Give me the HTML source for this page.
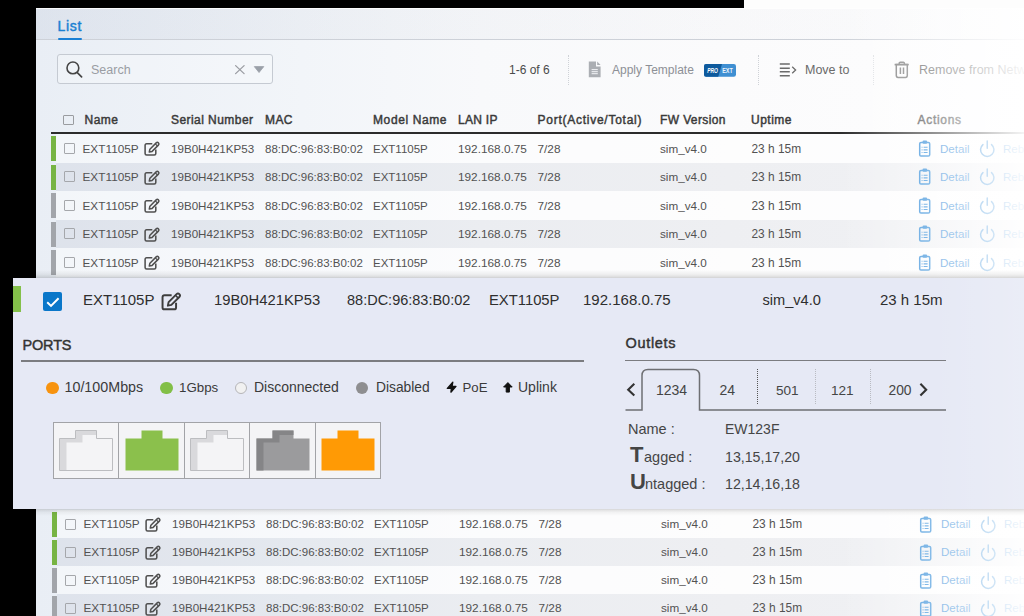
<!DOCTYPE html>
<html><head><meta charset="utf-8"><style>
html,body{margin:0;padding:0;}
body{width:1024px;height:616px;position:relative;overflow:hidden;background:#000;font-family:"Liberation Sans",sans-serif;}
.tx{position:absolute;left:0;top:0;font-family:"Liberation Sans",sans-serif;}
svg{overflow:visible}
</style></head><body>
<div id="list" style="position:absolute;left:36px;top:8px;width:988px;height:608px;background:linear-gradient(90deg,#e9eef5 0%,#f2f5f9 27%,#f8f9fb 45%,#fbfbfc 70%,#fdfdfe 100%);overflow:hidden">
<div style="position:absolute;left:0px;top:0px;width:988px;height:31px;background:linear-gradient(90deg,rgba(40,60,110,0.06) 0%,rgba(40,60,100,0.035) 30%,rgba(40,60,100,0.015) 70%,rgba(40,60,100,0.01) 100%)"></div>
<div style="position:absolute;left:0px;top:0px;width:988px;height:1px;background:rgba(255,255,255,0.8)"></div>
<div style="position:absolute;left:0px;top:31px;width:988px;height:1px;background:#cdd1d8"></div>
</div>
<svg class="tx" width="1024" height="616"><text x="57.5" y="30.5" font-size="14" fill="#1b7fd2" stroke="#1b7fd2" stroke-width="0.45" textLength="23.8" lengthAdjust="spacing">List</text></svg>
<div style="position:absolute;left:57.5px;top:37.5px;width:24.5px;height:2.5px;background:#1a7fd4;border-radius:1px"></div>
<div style="position:absolute;left:57px;top:54px;width:216px;height:30px;box-sizing:border-box;border:1px solid #c5cad2;border-radius:3px;background:rgba(255,255,255,0.25)"></div>
<svg style="position:absolute;left:62px;top:58px" width="24" height="24" viewBox="0 0 24 24"><circle cx="10.9" cy="9.9" r="5.9" fill="none" stroke="#454545" stroke-width="1.6"/><line x1="15.3" y1="14.6" x2="19.6" y2="18.8" stroke="#454545" stroke-width="1.7" stroke-linecap="round"/></svg>
<svg class="tx" width="1024" height="616"><text x="91" y="74" font-size="12.5" fill="#9a9da3" >Search</text></svg>
<svg style="position:absolute;left:232px;top:63px" width="16" height="13" viewBox="0 0 16 13"><path d="M3.6 2.6 L12.1 10.6 M12.1 2.6 L3.6 10.6" stroke="#9a9ca2" stroke-width="1.3" stroke-linecap="round"/></svg>
<svg style="position:absolute;left:252px;top:64px" width="14" height="10" viewBox="0 0 14 10"><path d="M2.3 2.6 L11.8 2.6 L7.05 8.5 Z" fill="#9aa0a8" stroke="#9aa0a8" stroke-width="0.8" stroke-linejoin="round"/></svg>
<svg class="tx" width="1024" height="616"><text x="509" y="74" font-size="12" fill="#4a4a4a" >1-6 of 6</text></svg>
<div style="position:absolute;left:567.5px;top:54.5px;width:0px;height:30px;border-left:1px dotted #cfd2d7"></div>
<svg style="position:absolute;left:587px;top:60px" width="16" height="19" viewBox="0 0 16 19"><path d="M1.8 1.6 H9 V6.4 H13.6 V17.3 H1.8 Z" fill="#abaeb3"/><path d="M10.2 1.6 L13.6 5 H10.2 Z" fill="#abaeb3"/><path d="M4.6 9.6 H10.8 M4.6 11.7 H10.8 M4.6 13.7 H10.8" stroke="#f3f4f7" stroke-width="1"/></svg>
<svg class="tx" width="1024" height="616"><text x="612" y="74" font-size="12" fill="#8d9096" >Apply Template</text></svg>
<svg style="position:absolute;left:704px;top:64px" width="32" height="13" viewBox="0 0 32 13"><defs><clipPath id="bc"><rect x="0" y="0" width="32" height="12.8" rx="2.2"/></clipPath></defs><g clip-path="url(#bc)"><rect width="32" height="13" fill="#3f8fd2"/><path d="M0 0 H18 L14.2 13 H0 Z" fill="#0e5a9d"/></g><text x="3.2" y="8.9" font-family="Liberation Sans" font-weight="bold" font-style="italic" font-size="6.4" textLength="10.8" lengthAdjust="spacingAndGlyphs" fill="#fff">PRO</text><text x="18.2" y="8.9" font-family="Liberation Sans" font-weight="bold" font-size="6.4" textLength="10.6" lengthAdjust="spacingAndGlyphs" fill="#eef5fc">EXT</text></svg>
<div style="position:absolute;left:757.5px;top:54.5px;width:0px;height:30px;border-left:1px dotted #cfd2d7"></div>
<svg style="position:absolute;left:777px;top:62px" width="22" height="16" viewBox="0 0 22 16"><path d="M2.8 2.1 H12.8 M2.8 6.2 H12.8 M2.8 9.8 H12.8 M2.8 13.8 H12.8" stroke="#6b6b6b" stroke-width="1.5"/><path d="M15.2 4.8 L18.6 8 L15.2 11.2" fill="none" stroke="#6b6b6b" stroke-width="1.3"/></svg>
<svg class="tx" width="1024" height="616"><text x="805" y="74" font-size="12.5" fill="#6a6a6a" >Move to</text></svg>
<div style="position:absolute;left:872.5px;top:54.5px;width:0px;height:30px;border-left:1px dotted #dfe1e4"></div>
<svg style="position:absolute;left:893px;top:60px" width="18" height="20" viewBox="0 0 18 20"><path d="M3.3 4.6 H14.3 V15.6 Q14.3 17.4 12.5 17.4 H5.1 Q3.3 17.4 3.3 15.6 Z" fill="none" stroke="#777" stroke-width="1.5"/><path d="M1.6 4.6 H15.8" stroke="#777" stroke-width="1.6"/><path d="M6.2 4.2 V3.3 Q6.2 2.2 7.3 2.2 H10.3 Q11.4 2.2 11.4 3.3 V4.2" fill="none" stroke="#777" stroke-width="1.4"/><path d="M7.4 7.5 V14 M10.5 7.5 V14" stroke="#777" stroke-width="1.5"/></svg>
<svg class="tx" width="1024" height="616"><text x="919" y="74" font-size="12.5" fill="#555" >Remove from Network</text></svg>
<div style="position:absolute;left:63px;top:114.5px;width:11px;height:10.5px;box-sizing:border-box;border:1px solid #9a9ca0;border-radius:1px"></div>
<svg class="tx" width="1024" height="616"><text x="84.5" y="124" font-size="12" fill="#3a3a3a" stroke="#3a3a3a" stroke-width="0.45" textLength="33.5" lengthAdjust="spacing">Name</text><text x="171" y="124" font-size="12" fill="#3a3a3a" stroke="#3a3a3a" stroke-width="0.45" textLength="82" lengthAdjust="spacing">Serial Number</text><text x="265" y="124" font-size="12" fill="#3a3a3a" stroke="#3a3a3a" stroke-width="0.45" textLength="27.5" lengthAdjust="spacing">MAC</text><text x="373" y="124" font-size="12" fill="#3a3a3a" stroke="#3a3a3a" stroke-width="0.45" textLength="73.5" lengthAdjust="spacing">Model Name</text><text x="458" y="124" font-size="12" fill="#3a3a3a" stroke="#3a3a3a" stroke-width="0.45" textLength="39.5" lengthAdjust="spacing">LAN IP</text><text x="537.5" y="124" font-size="12" fill="#3a3a3a" stroke="#3a3a3a" stroke-width="0.45" textLength="104" lengthAdjust="spacing">Port(Active/Total)</text><text x="660" y="124" font-size="12" fill="#3a3a3a" stroke="#3a3a3a" stroke-width="0.45" textLength="65.5" lengthAdjust="spacing">FW Version</text><text x="751" y="124" font-size="12" fill="#3a3a3a" stroke="#3a3a3a" stroke-width="0.45" textLength="40.5" lengthAdjust="spacing">Uptime</text><text x="917.5" y="124" font-size="12" fill="#3a3a3a" stroke="#3a3a3a" stroke-width="0.45" textLength="43.5" lengthAdjust="spacing">Actions</text></svg>
<div style="position:absolute;left:50.5px;top:132.3px;width:974px;height:2px;background:#2c2c2c"></div>
<div style="position:absolute;left:56px;top:134px;width:968px;height:28.5px;background:rgba(255,255,255,0.45)"></div>
<div style="position:absolute;left:51px;top:136.3px;width:5px;height:25.0px;background:#77b443"></div>
<div style="position:absolute;left:64px;top:142.95px;width:11px;height:11px;box-sizing:border-box;border:1px solid #a5a7ab;border-radius:1px"></div>
<svg class="tx" width="1024" height="616"><text x="82.5" y="152.55" font-size="11.8" fill="#525252" >EXT1105P</text></svg>
<svg style="position:absolute;left:143px;top:140.05px" width="18" height="18" viewBox="0 0 18 18"><path d="M9.3 3.8 H3.6 Q2.1 3.8 2.1 5.3 V13.4 Q2.1 14.9 3.6 14.9 H11.3 Q12.8 14.9 12.8 13.4 V9.6" fill="none" stroke="#505050" stroke-width="1.55"/><path d="M6.3 12 L6.9 9.2 L13.2 2.9 Q14.3 1.8 15.4 2.9 Q16.5 4 15.4 5.1 L9.1 11.4 Z" fill="none" stroke="#505050" stroke-width="1.5" stroke-linejoin="round"/><path d="M12.3 3.8 L14.5 6" stroke="#505050" stroke-width="1.2"/></svg>
<svg class="tx" width="1024" height="616"><text x="171" y="152.55" font-size="11.6" fill="#525252" >19B0H421KP53</text><text x="265" y="152.55" font-size="11.5" fill="#525252" >88:DC:96:83:B0:02</text><text x="373" y="152.55" font-size="11.5" fill="#525252" >EXT1105P</text><text x="458" y="152.55" font-size="11.8" fill="#525252" >192.168.0.75</text><text x="537.5" y="152.55" font-size="11.8" fill="#525252" >7/28</text><text x="660" y="152.55" font-size="11.7" fill="#525252" >sim_v4.0</text><text x="751.5" y="152.55" font-size="11.9" fill="#525252" >23 h 15m</text></svg>
<svg style="position:absolute;left:917px;top:138.75px" width="14" height="18" viewBox="0 0 14 18"><rect x="2.7" y="3.5" width="10" height="13.6" rx="1.3" fill="none" stroke="#1a7fd4" stroke-width="1.5"/><rect x="5.6" y="1.5" width="4.5" height="3.2" rx="1" fill="#1a7fd4"/><path d="M6.6 8.3 H10.6 M6.6 10.9 H10.6 M6.6 13.5 H10.6 M4.6 8.3 H5.5 M4.6 10.9 H5.5 M4.6 13.5 H5.5" stroke="#1a7fd4" stroke-width="1.1"/></svg>
<svg class="tx" width="1024" height="616"><text x="940" y="152.55" font-size="11.6" fill="#1a7fd4" >Detail</text></svg>
<svg style="position:absolute;left:979px;top:138.75px" width="16" height="18" viewBox="0 0 16 18"><path d="M3.95 5.57 A6.7 6.7 0 1 0 12.55 5.57" fill="none" stroke="#1a7fd4" stroke-width="1.5" stroke-linecap="round"/><path d="M8.25 2 V9.2" stroke="#1a7fd4" stroke-width="1.5" stroke-linecap="round"/></svg>
<svg class="tx" width="1024" height="616"><text x="1003" y="152.55" font-size="11.6" fill="#1a7fd4" >Reboot</text></svg>
<div style="position:absolute;left:56px;top:162.5px;width:968px;height:28.5px;background:rgba(30,45,80,0.058)"></div>
<div style="position:absolute;left:51px;top:164.8px;width:5px;height:25.0px;background:#77b443"></div>
<div style="position:absolute;left:64px;top:171.45px;width:11px;height:11px;box-sizing:border-box;border:1px solid #a5a7ab;border-radius:1px"></div>
<svg class="tx" width="1024" height="616"><text x="82.5" y="181.05" font-size="11.8" fill="#525252" >EXT1105P</text></svg>
<svg style="position:absolute;left:143px;top:168.55px" width="18" height="18" viewBox="0 0 18 18"><path d="M9.3 3.8 H3.6 Q2.1 3.8 2.1 5.3 V13.4 Q2.1 14.9 3.6 14.9 H11.3 Q12.8 14.9 12.8 13.4 V9.6" fill="none" stroke="#505050" stroke-width="1.55"/><path d="M6.3 12 L6.9 9.2 L13.2 2.9 Q14.3 1.8 15.4 2.9 Q16.5 4 15.4 5.1 L9.1 11.4 Z" fill="none" stroke="#505050" stroke-width="1.5" stroke-linejoin="round"/><path d="M12.3 3.8 L14.5 6" stroke="#505050" stroke-width="1.2"/></svg>
<svg class="tx" width="1024" height="616"><text x="171" y="181.05" font-size="11.6" fill="#525252" >19B0H421KP53</text><text x="265" y="181.05" font-size="11.5" fill="#525252" >88:DC:96:83:B0:02</text><text x="373" y="181.05" font-size="11.5" fill="#525252" >EXT1105P</text><text x="458" y="181.05" font-size="11.8" fill="#525252" >192.168.0.75</text><text x="537.5" y="181.05" font-size="11.8" fill="#525252" >7/28</text><text x="660" y="181.05" font-size="11.7" fill="#525252" >sim_v4.0</text><text x="751.5" y="181.05" font-size="11.9" fill="#525252" >23 h 15m</text></svg>
<svg style="position:absolute;left:917px;top:167.25px" width="14" height="18" viewBox="0 0 14 18"><rect x="2.7" y="3.5" width="10" height="13.6" rx="1.3" fill="none" stroke="#1a7fd4" stroke-width="1.5"/><rect x="5.6" y="1.5" width="4.5" height="3.2" rx="1" fill="#1a7fd4"/><path d="M6.6 8.3 H10.6 M6.6 10.9 H10.6 M6.6 13.5 H10.6 M4.6 8.3 H5.5 M4.6 10.9 H5.5 M4.6 13.5 H5.5" stroke="#1a7fd4" stroke-width="1.1"/></svg>
<svg class="tx" width="1024" height="616"><text x="940" y="181.05" font-size="11.6" fill="#1a7fd4" >Detail</text></svg>
<svg style="position:absolute;left:979px;top:167.25px" width="16" height="18" viewBox="0 0 16 18"><path d="M3.95 5.57 A6.7 6.7 0 1 0 12.55 5.57" fill="none" stroke="#1a7fd4" stroke-width="1.5" stroke-linecap="round"/><path d="M8.25 2 V9.2" stroke="#1a7fd4" stroke-width="1.5" stroke-linecap="round"/></svg>
<svg class="tx" width="1024" height="616"><text x="1003" y="181.05" font-size="11.6" fill="#1a7fd4" >Reboot</text></svg>
<div style="position:absolute;left:56px;top:191px;width:968px;height:28.5px;background:rgba(255,255,255,0.45)"></div>
<div style="position:absolute;left:51px;top:193.3px;width:5px;height:25.0px;background:#a2a5aa"></div>
<div style="position:absolute;left:64px;top:199.95px;width:11px;height:11px;box-sizing:border-box;border:1px solid #a5a7ab;border-radius:1px"></div>
<svg class="tx" width="1024" height="616"><text x="82.5" y="209.55" font-size="11.8" fill="#525252" >EXT1105P</text></svg>
<svg style="position:absolute;left:143px;top:197.05px" width="18" height="18" viewBox="0 0 18 18"><path d="M9.3 3.8 H3.6 Q2.1 3.8 2.1 5.3 V13.4 Q2.1 14.9 3.6 14.9 H11.3 Q12.8 14.9 12.8 13.4 V9.6" fill="none" stroke="#505050" stroke-width="1.55"/><path d="M6.3 12 L6.9 9.2 L13.2 2.9 Q14.3 1.8 15.4 2.9 Q16.5 4 15.4 5.1 L9.1 11.4 Z" fill="none" stroke="#505050" stroke-width="1.5" stroke-linejoin="round"/><path d="M12.3 3.8 L14.5 6" stroke="#505050" stroke-width="1.2"/></svg>
<svg class="tx" width="1024" height="616"><text x="171" y="209.55" font-size="11.6" fill="#525252" >19B0H421KP53</text><text x="265" y="209.55" font-size="11.5" fill="#525252" >88:DC:96:83:B0:02</text><text x="373" y="209.55" font-size="11.5" fill="#525252" >EXT1105P</text><text x="458" y="209.55" font-size="11.8" fill="#525252" >192.168.0.75</text><text x="537.5" y="209.55" font-size="11.8" fill="#525252" >7/28</text><text x="660" y="209.55" font-size="11.7" fill="#525252" >sim_v4.0</text><text x="751.5" y="209.55" font-size="11.9" fill="#525252" >23 h 15m</text></svg>
<svg style="position:absolute;left:917px;top:195.75px" width="14" height="18" viewBox="0 0 14 18"><rect x="2.7" y="3.5" width="10" height="13.6" rx="1.3" fill="none" stroke="#1a7fd4" stroke-width="1.5"/><rect x="5.6" y="1.5" width="4.5" height="3.2" rx="1" fill="#1a7fd4"/><path d="M6.6 8.3 H10.6 M6.6 10.9 H10.6 M6.6 13.5 H10.6 M4.6 8.3 H5.5 M4.6 10.9 H5.5 M4.6 13.5 H5.5" stroke="#1a7fd4" stroke-width="1.1"/></svg>
<svg class="tx" width="1024" height="616"><text x="940" y="209.55" font-size="11.6" fill="#1a7fd4" >Detail</text></svg>
<svg style="position:absolute;left:979px;top:195.75px" width="16" height="18" viewBox="0 0 16 18"><path d="M3.95 5.57 A6.7 6.7 0 1 0 12.55 5.57" fill="none" stroke="#1a7fd4" stroke-width="1.5" stroke-linecap="round"/><path d="M8.25 2 V9.2" stroke="#1a7fd4" stroke-width="1.5" stroke-linecap="round"/></svg>
<svg class="tx" width="1024" height="616"><text x="1003" y="209.55" font-size="11.6" fill="#1a7fd4" >Reboot</text></svg>
<div style="position:absolute;left:56px;top:219.5px;width:968px;height:28.5px;background:rgba(30,45,80,0.058)"></div>
<div style="position:absolute;left:51px;top:221.8px;width:5px;height:25.0px;background:#a2a5aa"></div>
<div style="position:absolute;left:64px;top:228.45px;width:11px;height:11px;box-sizing:border-box;border:1px solid #a5a7ab;border-radius:1px"></div>
<svg class="tx" width="1024" height="616"><text x="82.5" y="238.05" font-size="11.8" fill="#525252" >EXT1105P</text></svg>
<svg style="position:absolute;left:143px;top:225.55px" width="18" height="18" viewBox="0 0 18 18"><path d="M9.3 3.8 H3.6 Q2.1 3.8 2.1 5.3 V13.4 Q2.1 14.9 3.6 14.9 H11.3 Q12.8 14.9 12.8 13.4 V9.6" fill="none" stroke="#505050" stroke-width="1.55"/><path d="M6.3 12 L6.9 9.2 L13.2 2.9 Q14.3 1.8 15.4 2.9 Q16.5 4 15.4 5.1 L9.1 11.4 Z" fill="none" stroke="#505050" stroke-width="1.5" stroke-linejoin="round"/><path d="M12.3 3.8 L14.5 6" stroke="#505050" stroke-width="1.2"/></svg>
<svg class="tx" width="1024" height="616"><text x="171" y="238.05" font-size="11.6" fill="#525252" >19B0H421KP53</text><text x="265" y="238.05" font-size="11.5" fill="#525252" >88:DC:96:83:B0:02</text><text x="373" y="238.05" font-size="11.5" fill="#525252" >EXT1105P</text><text x="458" y="238.05" font-size="11.8" fill="#525252" >192.168.0.75</text><text x="537.5" y="238.05" font-size="11.8" fill="#525252" >7/28</text><text x="660" y="238.05" font-size="11.7" fill="#525252" >sim_v4.0</text><text x="751.5" y="238.05" font-size="11.9" fill="#525252" >23 h 15m</text></svg>
<svg style="position:absolute;left:917px;top:224.25px" width="14" height="18" viewBox="0 0 14 18"><rect x="2.7" y="3.5" width="10" height="13.6" rx="1.3" fill="none" stroke="#1a7fd4" stroke-width="1.5"/><rect x="5.6" y="1.5" width="4.5" height="3.2" rx="1" fill="#1a7fd4"/><path d="M6.6 8.3 H10.6 M6.6 10.9 H10.6 M6.6 13.5 H10.6 M4.6 8.3 H5.5 M4.6 10.9 H5.5 M4.6 13.5 H5.5" stroke="#1a7fd4" stroke-width="1.1"/></svg>
<svg class="tx" width="1024" height="616"><text x="940" y="238.05" font-size="11.6" fill="#1a7fd4" >Detail</text></svg>
<svg style="position:absolute;left:979px;top:224.25px" width="16" height="18" viewBox="0 0 16 18"><path d="M3.95 5.57 A6.7 6.7 0 1 0 12.55 5.57" fill="none" stroke="#1a7fd4" stroke-width="1.5" stroke-linecap="round"/><path d="M8.25 2 V9.2" stroke="#1a7fd4" stroke-width="1.5" stroke-linecap="round"/></svg>
<svg class="tx" width="1024" height="616"><text x="1003" y="238.05" font-size="11.6" fill="#1a7fd4" >Reboot</text></svg>
<div style="position:absolute;left:56px;top:248px;width:968px;height:28.5px;background:rgba(255,255,255,0.45)"></div>
<div style="position:absolute;left:51px;top:250.3px;width:5px;height:25.0px;background:#a2a5aa"></div>
<div style="position:absolute;left:64px;top:256.95px;width:11px;height:11px;box-sizing:border-box;border:1px solid #a5a7ab;border-radius:1px"></div>
<svg class="tx" width="1024" height="616"><text x="82.5" y="266.55" font-size="11.8" fill="#525252" >EXT1105P</text></svg>
<svg style="position:absolute;left:143px;top:254.05px" width="18" height="18" viewBox="0 0 18 18"><path d="M9.3 3.8 H3.6 Q2.1 3.8 2.1 5.3 V13.4 Q2.1 14.9 3.6 14.9 H11.3 Q12.8 14.9 12.8 13.4 V9.6" fill="none" stroke="#505050" stroke-width="1.55"/><path d="M6.3 12 L6.9 9.2 L13.2 2.9 Q14.3 1.8 15.4 2.9 Q16.5 4 15.4 5.1 L9.1 11.4 Z" fill="none" stroke="#505050" stroke-width="1.5" stroke-linejoin="round"/><path d="M12.3 3.8 L14.5 6" stroke="#505050" stroke-width="1.2"/></svg>
<svg class="tx" width="1024" height="616"><text x="171" y="266.55" font-size="11.6" fill="#525252" >19B0H421KP53</text><text x="265" y="266.55" font-size="11.5" fill="#525252" >88:DC:96:83:B0:02</text><text x="373" y="266.55" font-size="11.5" fill="#525252" >EXT1105P</text><text x="458" y="266.55" font-size="11.8" fill="#525252" >192.168.0.75</text><text x="537.5" y="266.55" font-size="11.8" fill="#525252" >7/28</text><text x="660" y="266.55" font-size="11.7" fill="#525252" >sim_v4.0</text><text x="751.5" y="266.55" font-size="11.9" fill="#525252" >23 h 15m</text></svg>
<svg style="position:absolute;left:917px;top:252.75px" width="14" height="18" viewBox="0 0 14 18"><rect x="2.7" y="3.5" width="10" height="13.6" rx="1.3" fill="none" stroke="#1a7fd4" stroke-width="1.5"/><rect x="5.6" y="1.5" width="4.5" height="3.2" rx="1" fill="#1a7fd4"/><path d="M6.6 8.3 H10.6 M6.6 10.9 H10.6 M6.6 13.5 H10.6 M4.6 8.3 H5.5 M4.6 10.9 H5.5 M4.6 13.5 H5.5" stroke="#1a7fd4" stroke-width="1.1"/></svg>
<svg class="tx" width="1024" height="616"><text x="940" y="266.55" font-size="11.6" fill="#1a7fd4" >Detail</text></svg>
<svg style="position:absolute;left:979px;top:252.75px" width="16" height="18" viewBox="0 0 16 18"><path d="M3.95 5.57 A6.7 6.7 0 1 0 12.55 5.57" fill="none" stroke="#1a7fd4" stroke-width="1.5" stroke-linecap="round"/><path d="M8.25 2 V9.2" stroke="#1a7fd4" stroke-width="1.5" stroke-linecap="round"/></svg>
<svg class="tx" width="1024" height="616"><text x="1003" y="266.55" font-size="11.6" fill="#1a7fd4" >Reboot</text></svg>
<div style="position:absolute;left:57px;top:510px;width:967px;height:28px;background:rgba(255,255,255,0.45)"></div>
<div style="position:absolute;left:52px;top:512.3px;width:5px;height:24.5px;background:#77b443"></div>
<div style="position:absolute;left:65px;top:518.7px;width:11px;height:11px;box-sizing:border-box;border:1px solid #a5a7ab;border-radius:1px"></div>
<svg class="tx" width="1024" height="616"><text x="83.5" y="528.3" font-size="11.8" fill="#525252" >EXT1105P</text></svg>
<svg style="position:absolute;left:144px;top:515.8px" width="18" height="18" viewBox="0 0 18 18"><path d="M9.3 3.8 H3.6 Q2.1 3.8 2.1 5.3 V13.4 Q2.1 14.9 3.6 14.9 H11.3 Q12.8 14.9 12.8 13.4 V9.6" fill="none" stroke="#505050" stroke-width="1.55"/><path d="M6.3 12 L6.9 9.2 L13.2 2.9 Q14.3 1.8 15.4 2.9 Q16.5 4 15.4 5.1 L9.1 11.4 Z" fill="none" stroke="#505050" stroke-width="1.5" stroke-linejoin="round"/><path d="M12.3 3.8 L14.5 6" stroke="#505050" stroke-width="1.2"/></svg>
<svg class="tx" width="1024" height="616"><text x="172" y="528.3" font-size="11.6" fill="#525252" >19B0H421KP53</text><text x="266" y="528.3" font-size="11.5" fill="#525252" >88:DC:96:83:B0:02</text><text x="374" y="528.3" font-size="11.5" fill="#525252" >EXT1105P</text><text x="459" y="528.3" font-size="11.8" fill="#525252" >192.168.0.75</text><text x="538.5" y="528.3" font-size="11.8" fill="#525252" >7/28</text><text x="661" y="528.3" font-size="11.7" fill="#525252" >sim_v4.0</text><text x="752.5" y="528.3" font-size="11.9" fill="#525252" >23 h 15m</text></svg>
<svg style="position:absolute;left:918px;top:514.5px" width="14" height="18" viewBox="0 0 14 18"><rect x="2.7" y="3.5" width="10" height="13.6" rx="1.3" fill="none" stroke="#1a7fd4" stroke-width="1.5"/><rect x="5.6" y="1.5" width="4.5" height="3.2" rx="1" fill="#1a7fd4"/><path d="M6.6 8.3 H10.6 M6.6 10.9 H10.6 M6.6 13.5 H10.6 M4.6 8.3 H5.5 M4.6 10.9 H5.5 M4.6 13.5 H5.5" stroke="#1a7fd4" stroke-width="1.1"/></svg>
<svg class="tx" width="1024" height="616"><text x="941" y="528.3" font-size="11.6" fill="#1a7fd4" >Detail</text></svg>
<svg style="position:absolute;left:980px;top:514.5px" width="16" height="18" viewBox="0 0 16 18"><path d="M3.95 5.57 A6.7 6.7 0 1 0 12.55 5.57" fill="none" stroke="#1a7fd4" stroke-width="1.5" stroke-linecap="round"/><path d="M8.25 2 V9.2" stroke="#1a7fd4" stroke-width="1.5" stroke-linecap="round"/></svg>
<svg class="tx" width="1024" height="616"><text x="1004" y="528.3" font-size="11.6" fill="#1a7fd4" >Reboot</text></svg>
<div style="position:absolute;left:57px;top:538px;width:967px;height:28px;background:rgba(30,45,80,0.058)"></div>
<div style="position:absolute;left:52px;top:540.3px;width:5px;height:24.5px;background:#77b443"></div>
<div style="position:absolute;left:65px;top:546.7px;width:11px;height:11px;box-sizing:border-box;border:1px solid #a5a7ab;border-radius:1px"></div>
<svg class="tx" width="1024" height="616"><text x="83.5" y="556.3" font-size="11.8" fill="#525252" >EXT1105P</text></svg>
<svg style="position:absolute;left:144px;top:543.8px" width="18" height="18" viewBox="0 0 18 18"><path d="M9.3 3.8 H3.6 Q2.1 3.8 2.1 5.3 V13.4 Q2.1 14.9 3.6 14.9 H11.3 Q12.8 14.9 12.8 13.4 V9.6" fill="none" stroke="#505050" stroke-width="1.55"/><path d="M6.3 12 L6.9 9.2 L13.2 2.9 Q14.3 1.8 15.4 2.9 Q16.5 4 15.4 5.1 L9.1 11.4 Z" fill="none" stroke="#505050" stroke-width="1.5" stroke-linejoin="round"/><path d="M12.3 3.8 L14.5 6" stroke="#505050" stroke-width="1.2"/></svg>
<svg class="tx" width="1024" height="616"><text x="172" y="556.3" font-size="11.6" fill="#525252" >19B0H421KP53</text><text x="266" y="556.3" font-size="11.5" fill="#525252" >88:DC:96:83:B0:02</text><text x="374" y="556.3" font-size="11.5" fill="#525252" >EXT1105P</text><text x="459" y="556.3" font-size="11.8" fill="#525252" >192.168.0.75</text><text x="538.5" y="556.3" font-size="11.8" fill="#525252" >7/28</text><text x="661" y="556.3" font-size="11.7" fill="#525252" >sim_v4.0</text><text x="752.5" y="556.3" font-size="11.9" fill="#525252" >23 h 15m</text></svg>
<svg style="position:absolute;left:918px;top:542.5px" width="14" height="18" viewBox="0 0 14 18"><rect x="2.7" y="3.5" width="10" height="13.6" rx="1.3" fill="none" stroke="#1a7fd4" stroke-width="1.5"/><rect x="5.6" y="1.5" width="4.5" height="3.2" rx="1" fill="#1a7fd4"/><path d="M6.6 8.3 H10.6 M6.6 10.9 H10.6 M6.6 13.5 H10.6 M4.6 8.3 H5.5 M4.6 10.9 H5.5 M4.6 13.5 H5.5" stroke="#1a7fd4" stroke-width="1.1"/></svg>
<svg class="tx" width="1024" height="616"><text x="941" y="556.3" font-size="11.6" fill="#1a7fd4" >Detail</text></svg>
<svg style="position:absolute;left:980px;top:542.5px" width="16" height="18" viewBox="0 0 16 18"><path d="M3.95 5.57 A6.7 6.7 0 1 0 12.55 5.57" fill="none" stroke="#1a7fd4" stroke-width="1.5" stroke-linecap="round"/><path d="M8.25 2 V9.2" stroke="#1a7fd4" stroke-width="1.5" stroke-linecap="round"/></svg>
<svg class="tx" width="1024" height="616"><text x="1004" y="556.3" font-size="11.6" fill="#1a7fd4" >Reboot</text></svg>
<div style="position:absolute;left:57px;top:566px;width:967px;height:28px;background:rgba(255,255,255,0.45)"></div>
<div style="position:absolute;left:52px;top:568.3px;width:5px;height:24.5px;background:#a2a5aa"></div>
<div style="position:absolute;left:65px;top:574.7px;width:11px;height:11px;box-sizing:border-box;border:1px solid #a5a7ab;border-radius:1px"></div>
<svg class="tx" width="1024" height="616"><text x="83.5" y="584.3" font-size="11.8" fill="#525252" >EXT1105P</text></svg>
<svg style="position:absolute;left:144px;top:571.8px" width="18" height="18" viewBox="0 0 18 18"><path d="M9.3 3.8 H3.6 Q2.1 3.8 2.1 5.3 V13.4 Q2.1 14.9 3.6 14.9 H11.3 Q12.8 14.9 12.8 13.4 V9.6" fill="none" stroke="#505050" stroke-width="1.55"/><path d="M6.3 12 L6.9 9.2 L13.2 2.9 Q14.3 1.8 15.4 2.9 Q16.5 4 15.4 5.1 L9.1 11.4 Z" fill="none" stroke="#505050" stroke-width="1.5" stroke-linejoin="round"/><path d="M12.3 3.8 L14.5 6" stroke="#505050" stroke-width="1.2"/></svg>
<svg class="tx" width="1024" height="616"><text x="172" y="584.3" font-size="11.6" fill="#525252" >19B0H421KP53</text><text x="266" y="584.3" font-size="11.5" fill="#525252" >88:DC:96:83:B0:02</text><text x="374" y="584.3" font-size="11.5" fill="#525252" >EXT1105P</text><text x="459" y="584.3" font-size="11.8" fill="#525252" >192.168.0.75</text><text x="538.5" y="584.3" font-size="11.8" fill="#525252" >7/28</text><text x="661" y="584.3" font-size="11.7" fill="#525252" >sim_v4.0</text><text x="752.5" y="584.3" font-size="11.9" fill="#525252" >23 h 15m</text></svg>
<svg style="position:absolute;left:918px;top:570.5px" width="14" height="18" viewBox="0 0 14 18"><rect x="2.7" y="3.5" width="10" height="13.6" rx="1.3" fill="none" stroke="#1a7fd4" stroke-width="1.5"/><rect x="5.6" y="1.5" width="4.5" height="3.2" rx="1" fill="#1a7fd4"/><path d="M6.6 8.3 H10.6 M6.6 10.9 H10.6 M6.6 13.5 H10.6 M4.6 8.3 H5.5 M4.6 10.9 H5.5 M4.6 13.5 H5.5" stroke="#1a7fd4" stroke-width="1.1"/></svg>
<svg class="tx" width="1024" height="616"><text x="941" y="584.3" font-size="11.6" fill="#1a7fd4" >Detail</text></svg>
<svg style="position:absolute;left:980px;top:570.5px" width="16" height="18" viewBox="0 0 16 18"><path d="M3.95 5.57 A6.7 6.7 0 1 0 12.55 5.57" fill="none" stroke="#1a7fd4" stroke-width="1.5" stroke-linecap="round"/><path d="M8.25 2 V9.2" stroke="#1a7fd4" stroke-width="1.5" stroke-linecap="round"/></svg>
<svg class="tx" width="1024" height="616"><text x="1004" y="584.3" font-size="11.6" fill="#1a7fd4" >Reboot</text></svg>
<div style="position:absolute;left:57px;top:594px;width:967px;height:28px;background:rgba(30,45,80,0.058)"></div>
<div style="position:absolute;left:52px;top:596.3px;width:5px;height:24.5px;background:#a2a5aa"></div>
<div style="position:absolute;left:65px;top:602.7px;width:11px;height:11px;box-sizing:border-box;border:1px solid #a5a7ab;border-radius:1px"></div>
<svg class="tx" width="1024" height="616"><text x="83.5" y="612.3" font-size="11.8" fill="#525252" >EXT1105P</text></svg>
<svg style="position:absolute;left:144px;top:599.8px" width="18" height="18" viewBox="0 0 18 18"><path d="M9.3 3.8 H3.6 Q2.1 3.8 2.1 5.3 V13.4 Q2.1 14.9 3.6 14.9 H11.3 Q12.8 14.9 12.8 13.4 V9.6" fill="none" stroke="#505050" stroke-width="1.55"/><path d="M6.3 12 L6.9 9.2 L13.2 2.9 Q14.3 1.8 15.4 2.9 Q16.5 4 15.4 5.1 L9.1 11.4 Z" fill="none" stroke="#505050" stroke-width="1.5" stroke-linejoin="round"/><path d="M12.3 3.8 L14.5 6" stroke="#505050" stroke-width="1.2"/></svg>
<svg class="tx" width="1024" height="616"><text x="172" y="612.3" font-size="11.6" fill="#525252" >19B0H421KP53</text><text x="266" y="612.3" font-size="11.5" fill="#525252" >88:DC:96:83:B0:02</text><text x="374" y="612.3" font-size="11.5" fill="#525252" >EXT1105P</text><text x="459" y="612.3" font-size="11.8" fill="#525252" >192.168.0.75</text><text x="538.5" y="612.3" font-size="11.8" fill="#525252" >7/28</text><text x="661" y="612.3" font-size="11.7" fill="#525252" >sim_v4.0</text><text x="752.5" y="612.3" font-size="11.9" fill="#525252" >23 h 15m</text></svg>
<svg style="position:absolute;left:918px;top:598.5px" width="14" height="18" viewBox="0 0 14 18"><rect x="2.7" y="3.5" width="10" height="13.6" rx="1.3" fill="none" stroke="#1a7fd4" stroke-width="1.5"/><rect x="5.6" y="1.5" width="4.5" height="3.2" rx="1" fill="#1a7fd4"/><path d="M6.6 8.3 H10.6 M6.6 10.9 H10.6 M6.6 13.5 H10.6 M4.6 8.3 H5.5 M4.6 10.9 H5.5 M4.6 13.5 H5.5" stroke="#1a7fd4" stroke-width="1.1"/></svg>
<svg class="tx" width="1024" height="616"><text x="941" y="612.3" font-size="11.6" fill="#1a7fd4" >Detail</text></svg>
<svg style="position:absolute;left:980px;top:598.5px" width="16" height="18" viewBox="0 0 16 18"><path d="M3.95 5.57 A6.7 6.7 0 1 0 12.55 5.57" fill="none" stroke="#1a7fd4" stroke-width="1.5" stroke-linecap="round"/><path d="M8.25 2 V9.2" stroke="#1a7fd4" stroke-width="1.5" stroke-linecap="round"/></svg>
<svg class="tx" width="1024" height="616"><text x="1004" y="612.3" font-size="11.6" fill="#1a7fd4" >Reboot</text></svg>
<div style="position:absolute;left:36px;top:8px;width:988px;height:608px;background:linear-gradient(90deg,rgba(255,255,255,0) 0%,rgba(255,255,255,0) 81.4%,rgba(255,255,255,0.95) 100%);"></div>
<div style="position:absolute;left:744px;top:0px;width:280px;height:8px;background:#fdfdfd"></div>
<div style="position:absolute;left:12.5px;top:278px;width:1011.5px;height:231px;background:#e6e9f5;box-shadow:0 0 3px rgba(0,0,0,0.08)"></div>
<div style="position:absolute;left:930px;top:278px;width:94px;height:231px;background:linear-gradient(90deg,rgba(255,255,255,0) 0%,rgba(255,255,255,0.18) 100%)"></div>
<div style="position:absolute;left:36px;top:270px;width:988px;height:8px;background:linear-gradient(180deg,rgba(0,0,0,0) 0%,rgba(0,0,0,0.05) 50%,rgba(0,0,0,0.13) 100%)"></div>
<div style="position:absolute;left:36px;top:509px;width:988px;height:7px;background:linear-gradient(0deg,rgba(0,0,0,0) 0%,rgba(0,0,0,0.04) 50%,rgba(0,0,0,0.11) 100%)"></div>
<div style="position:absolute;left:12.5px;top:286px;width:8.5px;height:26px;background:#84c04a"></div>
<div style="position:absolute;left:42.8px;top:291.5px;width:19.2px;height:19.2px;background:#0a77c9;border-radius:2px"></div>
<svg style="position:absolute;left:42.8px;top:291.5px" width="19.2" height="19.2" viewBox="0 0 19.2 19.2"><path d="M4.2 10.3 L8 13.9 L15.6 6.2" fill="none" stroke="#fff" stroke-width="2"/></svg>
<svg class="tx" width="1024" height="616"><text x="83" y="305" font-size="15" fill="#2e2e2e" >EXT1105P</text></svg>
<svg style="position:absolute;left:158px;top:289px" width="24" height="22" viewBox="-1.5 -1 19 17"><path d="M9.3 3.8 H3.6 Q2.1 3.8 2.1 5.3 V13.4 Q2.1 14.9 3.6 14.9 H11.3 Q12.8 14.9 12.8 13.4 V9.6" fill="none" stroke="#3d3d3d" stroke-width="1.55"/><path d="M6.3 12 L6.9 9.2 L13.2 2.9 Q14.3 1.8 15.4 2.9 Q16.5 4 15.4 5.1 L9.1 11.4 Z" fill="none" stroke="#3d3d3d" stroke-width="1.5" stroke-linejoin="round"/><path d="M12.3 3.8 L14.5 6" stroke="#3d3d3d" stroke-width="1.2"/></svg>
<svg class="tx" width="1024" height="616"><text x="214" y="305" font-size="14.8" fill="#2e2e2e" >19B0H421KP53</text><text x="347" y="305" font-size="14.5" fill="#2e2e2e" >88:DC:96:83:B0:02</text><text x="489" y="305" font-size="14.8" fill="#2e2e2e" >EXT1105P</text><text x="583" y="305" font-size="15" fill="#2e2e2e" >192.168.0.75</text><text x="762.5" y="305" font-size="14.6" fill="#2e2e2e" >sim_v4.0</text><text x="880" y="305" font-size="15" fill="#2e2e2e" >23 h 15m</text><text x="22.5" y="350" font-size="14.5" fill="#333" stroke="#333" stroke-width="0.45" textLength="49" lengthAdjust="spacing">PORTS</text></svg>
<div style="position:absolute;left:21px;top:360px;width:563px;height:2px;background:#7b7c80"></div>
<div style="position:absolute;left:46px;top:381.5px;width:12.5px;height:12.5px;background:#f7930f;border-radius:50%;box-sizing:border-box;"></div>
<svg class="tx" width="1024" height="616"><text x="64.5" y="392" font-size="14.3" fill="#3a3a3a" >10/100Mbps</text></svg>
<div style="position:absolute;left:160px;top:381.5px;width:12.5px;height:12.5px;background:#82bf47;border-radius:50%;box-sizing:border-box;"></div>
<svg class="tx" width="1024" height="616"><text x="179" y="392" font-size="13.3" fill="#3a3a3a" >1Gbps</text></svg>
<div style="position:absolute;left:234.5px;top:381.5px;width:12.5px;height:12.5px;background:#f1f1f1;border-radius:50%;box-sizing:border-box;border:1px solid #b5b5b8;"></div>
<svg class="tx" width="1024" height="616"><text x="254" y="392" font-size="14" fill="#3a3a3a" >Disconnected</text></svg>
<div style="position:absolute;left:355.5px;top:381.5px;width:12.5px;height:12.5px;background:#8e8e90;border-radius:50%;box-sizing:border-box;"></div>
<svg class="tx" width="1024" height="616"><text x="376" y="392" font-size="13.8" fill="#3a3a3a" >Disabled</text></svg>
<svg style="position:absolute;left:445px;top:380px" width="13" height="15" viewBox="0 0 13 15"><path d="M7.8 2.2 L2.3 8.4 H6.4 L5.9 12.2 L11 6.4 H7.1 Z" fill="#111" stroke="#111" stroke-width="1.3" stroke-linejoin="round"/></svg>
<svg class="tx" width="1024" height="616"><text x="462.5" y="392" font-size="13.2" fill="#3a3a3a" >PoE</text></svg>
<svg style="position:absolute;left:501px;top:380px" width="14" height="15" viewBox="0 0 14 15"><path d="M6.9 2.6 L2.6 7 H5.2 V12.1 H8.4 V7 H11.2 Z" fill="#111" stroke="#111" stroke-width="1" stroke-linejoin="round"/></svg>
<svg class="tx" width="1024" height="616"><text x="518" y="392" font-size="14" fill="#3a3a3a" >Uplink</text></svg>
<div style="position:absolute;left:53px;top:422px;width:328px;height:57px;box-sizing:border-box;border:1px solid #a2a3a7;background:#f4f4f6"></div>
<div style="position:absolute;left:118px;top:422px;width:1px;height:57px;background:#a2a3a7"></div>
<div style="position:absolute;left:184px;top:422px;width:1px;height:57px;background:#a2a3a7"></div>
<div style="position:absolute;left:249px;top:422px;width:1px;height:57px;background:#a2a3a7"></div>
<div style="position:absolute;left:315px;top:422px;width:1px;height:57px;background:#a2a3a7"></div>
<svg style="position:absolute;left:59px;top:430px" width="54" height="41" viewBox="0 0 54 41"><path d="M0.5 8.5 H16.5 V0.5 H37.5 V8.5 H53.5 V40.5 H0.5 Z" fill="#f4f4f6"/><path d="M0.5 8.5 H16.5 V0.5 H37.5 V5 H23.5 V12.5 H7.5 V40.5 H0.5 Z" fill="#d9d9dc"/><path d="M0.5 8.5 H16.5 V0.5 H37.5 V8.5 H53.5 V40.5 H0.5 Z" fill="none" stroke="#bcbdc0" stroke-width="1"/></svg>
<svg style="position:absolute;left:125px;top:430px" width="54" height="41" viewBox="0 0 54 41"><path d="M0.5 8.5 H16.5 V0.5 H37.5 V8.5 H53.5 V40.5 H0.5 Z" fill="#8bc04c"/></svg>
<svg style="position:absolute;left:190px;top:430px" width="54" height="41" viewBox="0 0 54 41"><path d="M0.5 8.5 H16.5 V0.5 H37.5 V8.5 H53.5 V40.5 H0.5 Z" fill="#f4f4f6"/><path d="M0.5 8.5 H16.5 V0.5 H37.5 V5 H23.5 V12.5 H7.5 V40.5 H0.5 Z" fill="#d9d9dc"/><path d="M0.5 8.5 H16.5 V0.5 H37.5 V8.5 H53.5 V40.5 H0.5 Z" fill="none" stroke="#bcbdc0" stroke-width="1"/></svg>
<svg style="position:absolute;left:256px;top:430px" width="54" height="41" viewBox="0 0 54 41"><path d="M0.5 8.5 H16.5 V0.5 H37.5 V8.5 H53.5 V40.5 H0.5 Z" fill="#9b9b9d"/><path d="M0.5 8.5 H16.5 V0.5 H37.5 V5 H23.5 V12.5 H7.5 V40.5 H0.5 Z" fill="#858587"/></svg>
<svg style="position:absolute;left:321px;top:430px" width="54" height="41" viewBox="0 0 54 41"><path d="M0.5 8.5 H16.5 V0.5 H37.5 V8.5 H53.5 V40.5 H0.5 Z" fill="#ff9a05"/></svg>
<svg class="tx" width="1024" height="616"><text x="625.5" y="347.5" font-size="14.5" fill="#333" stroke="#333" stroke-width="0.45" textLength="50" lengthAdjust="spacing">Outlets</text></svg>
<div style="position:absolute;left:624.5px;top:359.8px;width:321.5px;height:1.6px;background:#7b7c80"></div>
<svg style="position:absolute;left:622px;top:380px" width="16" height="20" viewBox="0 0 16 20"><path d="M12.3 3.8 L6.2 9.7 L12.3 15.6" fill="none" stroke="#333" stroke-width="2.1"/></svg>
<svg style="position:absolute;left:622px;top:366px" width="330" height="48" viewBox="0 0 330 48"><path d="M3.5 44 H20 V9.5 Q20 3.5 26 3.5 H71.5 Q77.5 3.5 77.5 9.5 V44 H324" fill="none" stroke="#6e6f73" stroke-width="1.5"/></svg>
<svg class="tx" width="1024" height="616"><text x="656" y="395.3" font-size="14" fill="#454545" >1234</text><text x="719.5" y="395.3" font-size="14" fill="#454545" >24</text></svg>
<div style="position:absolute;left:756.5px;top:369px;width:0px;height:35px;border-left:1.3px dotted #555"></div>
<svg class="tx" width="1024" height="616"><text x="776" y="395.3" font-size="13.6" fill="#454545" >501</text></svg>
<div style="position:absolute;left:814.5px;top:369px;width:0px;height:35px;border-left:1px dotted #b9bbc2"></div>
<svg class="tx" width="1024" height="616"><text x="831" y="395.3" font-size="13.6" fill="#454545" >121</text></svg>
<div style="position:absolute;left:870px;top:369px;width:0px;height:35px;border-left:1px dotted #b9bbc2"></div>
<svg class="tx" width="1024" height="616"><text x="888.5" y="395.3" font-size="13.8" fill="#454545" >200</text></svg>
<svg style="position:absolute;left:914px;top:380px" width="16" height="20" viewBox="0 0 16 20"><path d="M6.4 3.8 L12.2 9.7 L6.4 15.6" fill="none" stroke="#333" stroke-width="2.1"/></svg>
<svg class="tx" width="1024" height="616"><text x="628" y="434" font-size="14.5" fill="#454545" >Name :</text><text x="725" y="434" font-size="14" fill="#454545" >EW123F</text><text x="630" y="462" font-size="22" fill="#454545" font-weight="bold" >T</text><text x="644" y="462" font-size="14.5" fill="#454545" >agged :</text><text x="725" y="462" font-size="14.2" fill="#454545" >13,15,17,20</text><text x="630" y="489" font-size="22" fill="#454545" font-weight="bold" >U</text><text x="645" y="489" font-size="14.5" fill="#454545" >ntagged :</text><text x="725" y="489" font-size="14.2" fill="#454545" >12,14,16,18</text></svg>
</body></html>
